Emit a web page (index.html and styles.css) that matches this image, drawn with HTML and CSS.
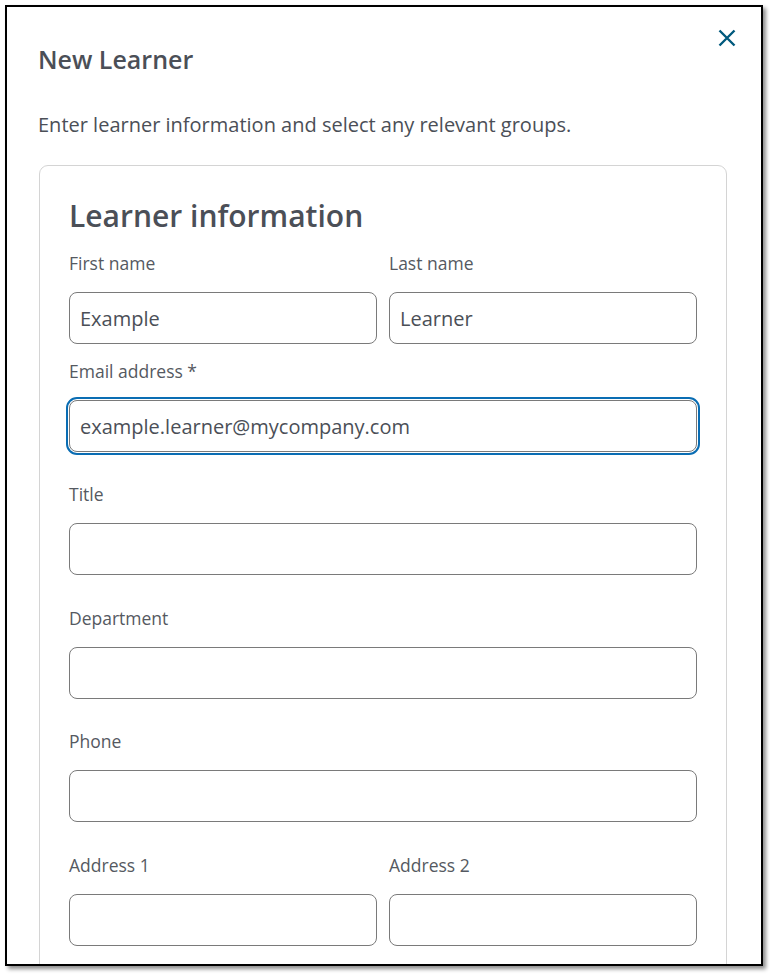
FILE: index.html
```html
<!DOCTYPE html>
<html lang="en">
<head>
<meta charset="utf-8">
<title>New Learner</title>
<link rel="stylesheet" href="styles.css">
</head>
<body>
<div class="dialog">
  <header class="dialog-header">
    <h1 class="dialog-title">New Learner</h1>
    <button class="close-btn" aria-label="Close">
      <svg width="18" height="18" viewBox="0 0 18 18"><path d="M1.5 1.5 L16.5 16.5 M16.5 1.5 L1.5 16.5" stroke="#00597d" stroke-width="2.4" fill="none"/></svg>
    </button>
  </header>
  <p class="intro">Enter learner information and select any relevant groups.</p>
  <section class="card">
    <h2 class="card-title">Learner information</h2>
    <div class="row two tight">
      <div class="field">
        <label class="label">First name</label>
        <input class="input" value="Example">
      </div>
      <div class="field">
        <label class="label">Last name</label>
        <input class="input" value="Learner">
      </div>
    </div>
    <div class="row">
      <div class="field">
        <label class="label">Email address *</label>
        <input class="input focused" value="example.learner@mycompany.com">
      </div>
    </div>
    <div class="row">
      <div class="field">
        <label class="label">Title</label>
        <input class="input" value="">
      </div>
    </div>
    <div class="row">
      <div class="field">
        <label class="label">Department</label>
        <input class="input" value="">
      </div>
    </div>
    <div class="row">
      <div class="field">
        <label class="label">Phone</label>
        <input class="input" value="">
      </div>
    </div>
    <div class="row two">
      <div class="field">
        <label class="label">Address 1</label>
        <input class="input" value="">
      </div>
      <div class="field">
        <label class="label">Address 2</label>
        <input class="input" value="">
      </div>
    </div>
  </section>
</div>
</body>
</html>
```

FILE: styles.css
```css
html, body {
  margin: 0;
  padding: 0;
  background: #ffffff;
  height: 976px;
  overflow: hidden;
}
body {
  font-family: "Open Sans", "Noto Sans", sans-serif;
  color: #4b4f57;
  padding: 5px 0 0 5px;
  box-sizing: border-box;
}
.dialog {
  width: 758px;
  height: 961px;
  box-sizing: border-box;
  border: 2px solid #000;
  box-shadow: 3px 3px 4px rgba(0,0,0,0.45);
  background: #fff;
  overflow: hidden;
  padding: 0 34px 0 31px;
}
.dialog-header {
  display: flex;
  justify-content: space-between;
  align-items: flex-start;
  padding-top: 37px;
}
.dialog-title {
  margin: 0;
  font-size: 25px;
  line-height: 30px;
  font-weight: 600;
  color: #4b4f57;
}
.close-btn {
  border: 0;
  background: none;
  padding: 0;
  margin: -15px -9px 0 0;
  width: 18px;
  height: 18px;
  cursor: pointer;
}
.close-btn svg { display: block; }
.intro {
  margin: 37px 0 0 0;
  font-size: 20px;
  line-height: 28px;
  color: #4b4f57;
}
.card {
  margin: 26px 0 0 1px;
  border: 1px solid #d4d4d4;
  border-radius: 9px;
  padding: 30px 29px 60px 29px;
  width: 688px;
  box-sizing: border-box;
}
.card-title {
  margin: 0 0 15px 0;
  font-size: 30px;
  line-height: 40px;
  font-weight: 600;
  color: #4b4f57;
}
.row {
  display: grid;
  grid-template-columns: 1fr;
  margin-bottom: 30.4px;
}
.row.two {
  grid-template-columns: 1fr 1fr;
  column-gap: 12px;
}
.row.tight { margin-bottom: 15px; }
.field {
  display: flex;
  flex-direction: column;
}
.label {
  font-size: 17.5px;
  line-height: 24px;
  margin-bottom: 17px;
  color: #555961;
}
.input {
  height: 52px;
  box-sizing: border-box;
  border: 1px solid #7a7a7a;
  border-radius: 8px;
  padding: 0 10px;
  font-family: "Open Sans", "Noto Sans", sans-serif;
  font-size: 20px;
  color: #4b4f57;
  background: #fff;
  width: 100%;
}
.input.focused {
  outline: 2px solid #0a6db3;
  outline-offset: 1px;
}
```
